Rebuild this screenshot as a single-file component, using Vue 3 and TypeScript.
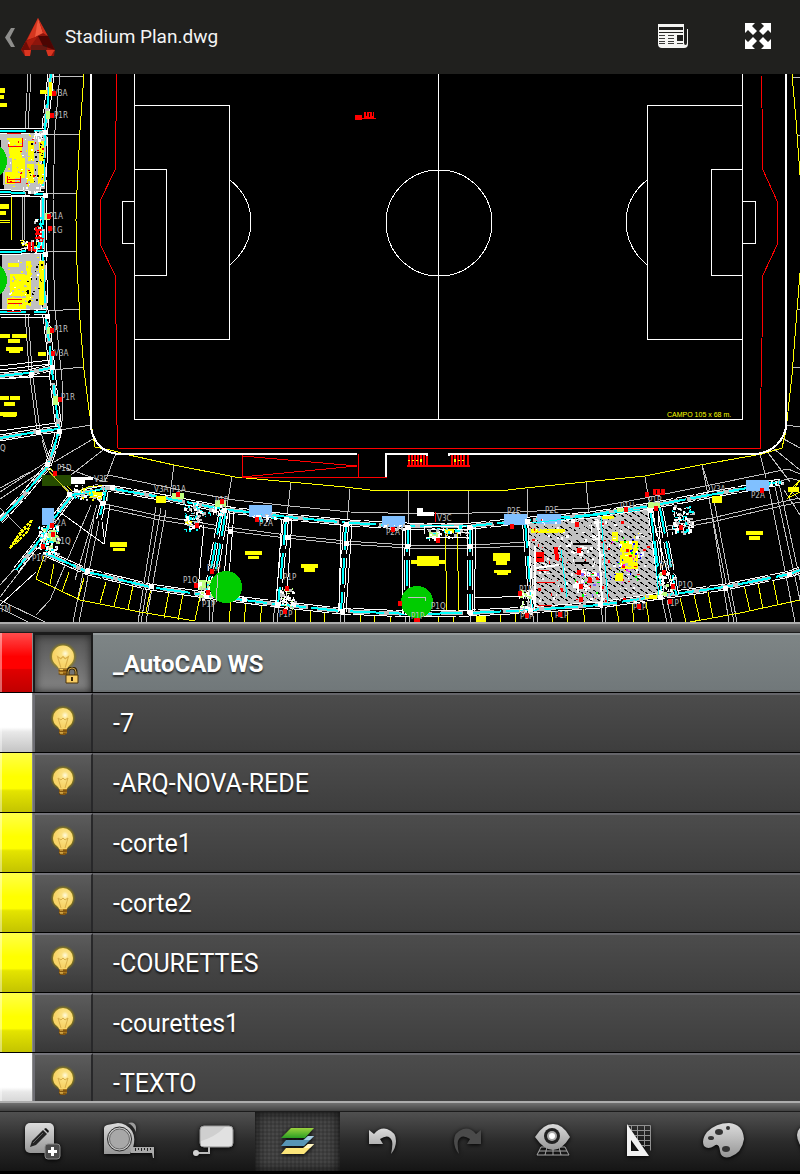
<script setup lang="ts">
import { ref } from 'vue'

interface Layer { name: string; tone: 'red' | 'white' | 'yellow'; locked?: boolean }
interface Tag { x: number; y: number; t: string }
interface Speck { x: number; y: number; w: number; h: number; c: string }

const layers: Layer[] = [
  { name: '_AutoCAD WS', tone: 'red', locked: true },
  { name: '-7', tone: 'white' },
  { name: '-ARQ-NOVA-REDE', tone: 'yellow' },
  { name: '-corte1', tone: 'yellow' },
  { name: '-corte2', tone: 'yellow' },
  { name: '-COURETTES', tone: 'yellow' },
  { name: '-courettes1', tone: 'yellow' },
  { name: '-TEXTO', tone: 'white' },
]
const selected = ref(0)

const tools = ['Draw', 'Measure', 'Comment', 'Layers', 'Undo', 'Redo', 'View', 'Units', 'Colors', 'Location']
const activeTool = ref('Layers')

const WHITE = '#fff'
const GRAY = '#c0c0c0'
const CYAN = '#0ff'
const YELLOW = '#ff0'
const RED = '#f00'

// Wall centre lines of the stands
const walls = [
  '51,74 48,100 45,128 43,200 43,250 45,310 50,350 54,390 59,430 54,448 48,465',
  '72,495 108,488 160,497 222,509 288,517 350,523 407,526 471,526 530,520 590,515 650,506 720,493 780,482',
  '45,553 88,572 150,587 205,595 275,604 341,611 410,614 470,613 530,610 600,605 660,596 725,587 790,574 800,570',
  '0,376 28,373 50,368',
  '0,438 36,432 58,429',
  '48,466 24,495 0,521',
  '72,495 56,516 36,545 16,570',
]
const slimWalls = [
  '222,509 206,596', '226,510 214,582', '286,519 278,606', '346,524 341,612', '408,526 406,614',
  '470,526 470,614', '525,522 532,610', '650,507 662,597', '660,508 676,594', '0,131 44,131', '0,192 44,194',
  '0,252 44,251', '0,312 46,312', '106,490 99,520',
]
const grayLines = [
  '60,74 55,130 53,200 53,250 55,310 59,350 62,380 63,416 60,430',
  '108,475 190,492 235,500 290,506 350,512 425,514 520,512 590,508 640,499 720,483 788,469 800,474',
  '105,504 160,516 220,526 286,535 346,541 407,545 470,545 530,542 570,538', '105,508 160,520 220,530 286,538 346,544 407,548 470,548 530,546',
  '652,529 712,518 772,504 800,498', '652,533 712,522 772,508 800,502',
  '28,74 25,130', '31,74 28,130', '22,195 22,240', '24,195 24,240', '25,312 29,370 37,430', '28,312 32,370 40,430 50,460',
  '50,76 84,77', '46,134 79,135', '45,193 77,193', '44,252 76,251', '46,311 80,309', '52,370 84,367', '60,430 91,425',
  '54,462 93,439', '62,482 103,450', '60,466 105,482 116,453', '166,510 146,622', '161,508 141,622', '156,507 138,622',
  '97,505 75,580', '91,505 50,600 36,615', '99,521 79,622', '94,519 73,622', '206,596 214,602 212,622', '210,600 209,622',
  '174,465 170,495', '232,476 227,506', '291,482 287,516', '350,489 347,522', '409,491 408,525', '468,491 468,525',
  '527,489 528,520', '586,482 589,514', '645,477 650,506', '702,465 710,490', '760,454 766,478', '766,450 790,482', '773,448 800,470', '782,438 800,448',
  '702,465 734,622', '712,490 737,622', '708,490 729,622', '774,482 800,600', '779,483 800,580', '768,484 795,622', '786,425 800,427',
  '792,77 800,77', '797,135 800,135', '797,309 800,309', '793,367 800,368',
  '0,492 48,461', '0,499 48,467', '0,488 30,472', '0,585 36,545', '0,597 34,553', '0,600 45,622', '0,608 28,622', '22,530 0,508',
  '48,466 70,493', '42,440 48,460', '600,600 603,622', '605,600 606,622', '532,610 534,622', '537,610 538,622', '662,600 667,622', '667,600 672,622',
  '406,614 405,622', '410,614 409,622', '470,614 470,622', '275,604 273,622', '279,604 277,622', '341,612 340,622', '345,612 344,622',
  '778,482 790,478 800,481', '784,490 800,515', '788,488 800,500',
]
const whiteLines = [
  '57,510 104,544 110,505', '102,522 105,544', '36,572 0,605', '198,590 204,525', '228,588 234,512', '223,588 230,512',
  '474,598 530,596', '658,513 664,590', '652,514 672,590', '424,534 424,526 466,526', '426,537 466,538', '0,366 50,360', '0,370 50,364', '0,379 50,376',
  '0,431 56,423', '0,128 44,128', '0,196 44,196', '0,249 20,249', '0,317 46,318', '286,519 292,520 286,606', '346,524 352,525 346,612',
  '476,527 474,612', '528,525 532,610', '402,526 403,614', '282,519 276,606', '341,524 339,612',
]
const yellowLines = [
  '84,74 80,130 77,190 76,220 77,265 80,320 84,370 89,410 95,447 110,450 129,455 174,465 235,477 290,482 345,487 370,490 508,490 525,488 585,482 645,476 700,465 762,454 782,448 786,430 792,375 797,310 800,273',
  '792,74 796,120 800,175', '46,468 72,496', '48,466 74,493', '74,493 88,487 108,485', '44,556 36,579 80,600 140,612 195,621',
  '690,622 740,613 800,600', '445,526 447,614', '457,526 459,614', '11,193 11,240', '0,220 10,220', '0,222 10,222', '450,526 447,536',
  '790,490 800,480 788,498 800,492',
]
const roomLines = ['601,517 608,602', '561,550 567,597', '651,512 659,597', '532,523 640,510']

const seats: string[] = [
  '54,564 50,584', '69,572 62,592', '84,578 78,599', '106,582 100,603', '120,584 114,606', '133,586 128,609', '151,588 146,612',
  '169,592 164,618', '183,594 178,620', '200,597 195,620', '231,600 229,622', '246,602 244,622', '262,604 260,622',
  '295,608 295,622', '310,610 310,622', '325,612 324,622', '360,613 360,622', '375,614 374,622', '390,615 390,622', '438,615 438,622',
  '453,615 453,622', '484,614 484,622', '500,614 500,622', '515,613 515,622', '551,612 553,622', '567,609 568,622', '583,607 585,622',
  '616,605 619,622', '632,603 634,622', '646,602 649,622', '680,598 686,622', '694,595 700,621', '708,592 713,618', '744,585 750,611', '758,583 763,609', '773,580 778,605',
]

const yellowBlocks = [
  [110, 542, 17, 5], [113, 548, 12, 3], [245, 551, 17, 4], [248, 556, 11, 3], [301, 564, 17, 4], [304, 568, 11, 4],
  [411, 560, 34, 4], [417, 556, 22, 10], [493, 553, 17, 8], [496, 560, 11, 5], [494, 570, 17, 3], [497, 573, 11, 2],
  [746, 531, 17, 4], [749, 536, 11, 4], [0, 88, 5, 5], [0, 95, 4, 4], [0, 103, 7, 4], [0, 204, 9, 5], [0, 211, 6, 4],
  [0, 334, 10, 4], [12, 334, 15, 4], [8, 339, 12, 4], [6, 347, 17, 4], [9, 351, 11, 2], [0, 396, 9, 4], [10, 396, 10, 4], [4, 402, 11, 4],
  [0, 412, 17, 4], [3, 415, 13, 2], [40, 90, 7, 4], [38, 352, 8, 4], [9, 138, 13, 20], [12, 158, 13, 20], [5, 172, 10, 12],
  [28, 141, 6, 20], [39, 141, 5, 20], [27, 164, 7, 19], [38, 164, 6, 20], [8, 263, 11, 4], [26, 261, 5, 22], [39, 261, 5, 22],
  [26, 283, 5, 22], [39, 283, 5, 22], [10, 274, 16, 22], [7, 298, 19, 11], [156, 496, 10, 7], [90, 492, 12, 6], [185, 521, 7, 4],
  [531, 529, 34, 4], [601, 516, 13, 3], [620, 541, 18, 28], [612, 532, 6, 9], [615, 573, 8, 8], [645, 595, 12, 4], [445, 529, 9, 4],
  [712, 496, 10, 7], [788, 487, 11, 5], [476, 616, 10, 6], [49, 82, 3, 14],
]
const blueBlocks = [[42, 508, 12, 17], [249, 505, 23, 12], [382, 516, 23, 11], [504, 514, 23, 11], [537, 514, 24, 10], [746, 480, 23, 11]]
const greenish = [[172, 493, 12, 6], [215, 500, 11, 7], [49, 530, 7, 12], [199, 580, 7, 10], [429, 532, 10, 5], [648, 502, 12, 6], [46, 111, 4, 8], [45, 213, 5, 7], [47, 327, 5, 7], [53, 396, 5, 9], [617, 508, 10, 4], [657, 592, 10, 4]]
const redBlocks = [
  [52, 91], [50, 113], [47, 214], [48, 226], [50, 328], [51, 351], [58, 397], [53, 471], [176, 492], [220, 499], [255, 517], [391, 527], [436, 538],
  [510, 524], [624, 507], [654, 506], [760, 488], [50, 523], [51, 532], [41, 544], [195, 523], [210, 569], [194, 583], [206, 590], [285, 586], [283, 609],
  [398, 601], [518, 591], [525, 613], [558, 612], [637, 604], [668, 599], [671, 584], [662, 570], [679, 525], [575, 522], [577, 548], [577, 570], [579, 584], [579, 597], [588, 578], [645, 492],
]
const nodes = [
  [45, 462], [67, 492], [85, 569], [149, 584], [204, 593], [242, 597], [275, 602], [340, 609], [405, 610], [468, 610], [528, 608], [598, 602], [658, 595],
  [723, 586], [787, 572], [222, 508], [284, 517], [344, 522], [405, 525], [467, 525], [525, 519], [648, 508], [285, 535], [344, 541], [405, 544], [467, 544],
  [228, 529], [50, 365], [57, 429], [36, 430], [43, 130], [43, 193], [43, 252], [45, 314], [29, 372], [110, 485], [100, 501],
]

const tags: Tag[] = [
  { x: 53, y: 96, t: 'V3A' }, { x: 54, y: 118, t: 'P1R' }, { x: 49, y: 219, t: 'P1A' }, { x: 48, y: 233, t: 'P1G' }, { x: 54, y: 332, t: 'P1R' },
  { x: 54, y: 356, t: 'V3A' }, { x: 61, y: 400, t: 'P1R' }, { x: 0, y: 451, t: 'Q' }, { x: 57, y: 471, t: 'P1D' }, { x: 94, y: 482, t: 'V3E' },
  { x: 154, y: 492, t: 'V3A' }, { x: 172, y: 492, t: 'P1A' }, { x: 215, y: 503, t: 'P1P' }, { x: 259, y: 526, t: 'P2A' }, { x: 386, y: 535, t: 'P2A' },
  { x: 437, y: 521, t: 'V3C' }, { x: 507, y: 514, t: 'P2E' }, { x: 545, y: 513, t: 'P2E' }, { x: 620, y: 509, t: 'P1H' }, { x: 648, y: 503, t: 'P1B' },
  { x: 711, y: 492, t: 'V3A' }, { x: 751, y: 498, t: 'P2A' }, { x: 52, y: 526, t: 'P2A' }, { x: 56, y: 544, t: 'P1Q' }, { x: 32, y: 561, t: 'P1Q' },
  { x: 183, y: 583, t: 'P1Q' }, { x: 202, y: 607, t: 'P1P' }, { x: 207, y: 571, t: 'P1P' }, { x: 283, y: 580, t: 'P1P' }, { x: 279, y: 617, t: 'P1P' }, { x: 431, y: 609, t: 'P1Q' },
  { x: 411, y: 619, t: 'P1P' }, { x: 519, y: 592, t: 'P1P' }, { x: 520, y: 619, t: 'P1P' }, { x: 555, y: 618, t: 'P1P' }, { x: 633, y: 610, t: 'P1P' },
  { x: 678, y: 588, t: 'P1Q' }, { x: 670, y: 606, t: '1P' }, { x: 660, y: 568, t: 'P1P' }, { x: 0, y: 612, t: 'TM' },
]

// Small fittings scattered over a room, from a fixed seed so that every draw is the same
function scatter(x: number, y: number, w: number, h: number, n: number, colors: string[], seed: number, size = 3): Speck[] {
  let s = seed
  const next = (): number => {
    s = (s * 1103515245 + 12345) % 2147483648
    return s / 2147483648
  }
  return Array.from({ length: n }, () => ({
    x: Math.round(x + next() * w),
    y: Math.round(y + next() * h),
    w: 1 + Math.floor(next() * size),
    h: 1 + Math.floor(next() * size),
    c: colors[Math.floor(next() * colors.length)],
  }))
}
const specks: Speck[] = [
  ...scatter(6, 134, 37, 56, 100, [GRAY, WHITE, GRAY, YELLOW, YELLOW, RED], 7, 2),
  ...scatter(28, 142, 15, 40, 20, ['#000'], 8, 2),
  ...scatter(34, 130, 9, 10, 26, [WHITE, GRAY], 9),
  ...scatter(22, 185, 20, 8, 26, [WHITE, GRAY], 10),
  ...scatter(6, 256, 37, 54, 90, [GRAY, WHITE, YELLOW, YELLOW, GRAY], 11, 2),
  ...scatter(26, 262, 17, 42, 20, ['#000'], 12, 2),
  ...scatter(18, 238, 20, 12, 50, [GRAY, WHITE, YELLOW], 13),
  ...scatter(34, 216, 8, 34, 40, [WHITE, CYAN, GRAY, RED], 17),
  ...scatter(183, 502, 17, 28, 90, [WHITE, GRAY, CYAN, WHITE], 19),
  ...scatter(200, 504, 26, 12, 40, [WHITE, GRAY, CYAN], 23),
  ...scatter(38, 525, 20, 28, 110, [WHITE, GRAY, CYAN, '#c0ff80', WHITE], 29),
  ...scatter(280, 588, 14, 20, 60, [WHITE, GRAY, '#c0ff80', WHITE], 31),
  ...scatter(199, 578, 14, 20, 60, [WHITE, GRAY, '#c0ff80'], 37),
  ...scatter(426, 526, 42, 12, 60, [WHITE, CYAN, GRAY, WHITE], 41),
  ...scatter(672, 504, 20, 28, 110, [WHITE, GRAY, CYAN, WHITE], 43),
  ...scatter(658, 572, 16, 22, 60, [WHITE, GRAY, '#c0ff80', WHITE], 47),
  ...scatter(519, 590, 14, 22, 70, [WHITE, GRAY, '#c0ff80', WHITE], 53),
  ...scatter(530, 518, 118, 84, 380, [WHITE, GRAY, GRAY, GRAY, WHITE, RED], 59),
  ...scatter(570, 517, 32, 84, 90, [GRAY, WHITE, GRAY], 60, 5),
  ...scatter(575, 572, 28, 24, 40, ['#0f0', '#8060ff', WHITE, RED], 61),
  ...scatter(608, 532, 32, 50, 40, ['#f0f', '#00f', '#0f0', YELLOW], 67, 2),
  ...scatter(72, 484, 32, 16, 50, [WHITE, CYAN, YELLOW, GRAY], 71),
  ...scatter(768, 479, 14, 6, 20, [WHITE, GRAY, CYAN], 73),
  ...scatter(384, 524, 20, 5, 20, [WHITE, GRAY], 79),
  ...scatter(250, 511, 28, 8, 24, [WHITE, GRAY, CYAN], 83),
]
</script>

<template>
  <div class="app">
    <header class="topbar">
      <button class="back" aria-label="Back">
        <svg width="50" height="40" viewBox="5 16 50 40" aria-hidden="true">
          <path d="M11 27h4l-5 9.500 5 9.500h-4l-6-9.500z" fill="#8e8e8c" />
          <path d="M38 17 21 49l4 6h5l1-6h16l2 6h5l1-6z" fill="#8d150c" />
          <path d="M38 17 27 39l9-3z" fill="#d4361f" /><path d="M38 17l-3 19 8-4z" fill="#f0593e" /><path d="M38 17l5 15 5 3z" fill="#cf2e1b" />
          <path d="M26 40l12-5-10 14h-7z" fill="#a81c0e" /><path d="M38 35l10 0 7 14-12-4z" fill="#4c0502" /><path d="M21 49l5-9 4 9z" fill="#700c05" />
          <path d="M31 44h16v5H31z" fill="#20201e" opacity="0.35" />
          <path d="M24 49h7l-1 6h-5zM46 49h9l-1 1-3 5h-3z" fill="#d93520" />
        </svg>
      </button>
      <h1>Stadium Plan.dwg</h1>
      <button class="act" aria-label="Properties">
        <svg width="32" height="26" viewBox="1 0 32 26" aria-hidden="true">
          <path d="M1 1h26v19q0 2 1.500 2t1.500-2V6h1v15q0 4-4 4H5q-4 0-4-4z" fill="#f5f5f3" />
          <path d="M2 4h24v3H2zM2 9h24v1H2zM20 12h6v6h-6z" fill="#20201e" />
          <path d="M2 12.500h6M11 12.500h6M2 15.500h6M11 15.500h6M2 18.500h6M11 18.500h6M2 20.500h6M11 20.500h6M20 20.500h6" stroke="#3c3c3a" fill="none" />
        </svg>
      </button>
      <button class="act" aria-label="Full screen">
        <svg width="26" height="26" viewBox="0 0 26 26" fill="#fff" aria-hidden="true">
          <path d="M0 0h10L7 3l5 5-4 4-5-5-3 3z" />
          <path d="M26 0H16l3 3-5 5 4 4 5-5 3 3z" />
          <path d="M0 26h10l-3-3 5-5-4-4-5 5-3-3z" />
          <path d="M26 26H16l3-3-5-5 4-4 5 5 3-3z" />
        </svg>
      </button>
    </header>

    <main>
      <svg class="plan" viewBox="0 74 800 548" role="img" aria-label="Stadium plan" shape-rendering="crispEdges">
        <defs>
          <pattern id="hatch" width="8" height="7" patternUnits="userSpaceOnUse">
            <rect width="8" height="7" fill="#c0c0c0" />
            <path d="M0 1l4 3M5 4l3 2" stroke="#000" fill="none" />
          </pattern>
        </defs>
        <path d="M0 133h44v59H4zM2 253h42v58H2z" fill="#c0c0c0" />
        <path d="M528 523 650 508 659 596 532 608z" fill="url(#hatch)" />
        <path d="M75 492l15-6h18v15l-20-5z" fill="#5ba394" />
        <g fill="none" stroke="#c0c0c0"><polyline v-for="p in grayLines" :key="p" :points="p" /></g>
        <g fill="none" stroke="#ff0">
          <polyline v-for="p in yellowLines" :key="p" :points="p" />
          <polyline v-for="p in seats" :key="p" :points="p" />
        </g>
        <g fill="none">
          <g v-for="p in walls" :key="p">
            <polyline :points="p" stroke="#fff" stroke-width="7" stroke-dasharray="40 3 18 2" />
            <polyline :points="p" stroke="#000" stroke-width="5" />
            <polyline :points="p" stroke="#c0c0c0" stroke-width="4" stroke-dasharray="22 9" />
            <polyline :points="p" stroke="#0ff" stroke-width="2" stroke-dasharray="34 5" />
          </g>
          <g v-for="p in slimWalls" :key="p">
            <polyline :points="p" stroke="#fff" stroke-width="6" stroke-dasharray="30 4" />
            <polyline :points="p" stroke="#000" stroke-width="4" />
            <polyline :points="p" stroke="#0ff" stroke-width="2" stroke-dasharray="26 8" />
          </g>
        </g>
        <g fill="none" stroke="#fff"><polyline v-for="p in whiteLines" :key="p" :points="p" /></g>
        <g fill="#80c0ff"><rect v-for="(b, i) in blueBlocks" :key="i" :x="b[0]" :y="b[1]" :width="b[2]" :height="b[3]" /></g>
        <g fill="#c0ff80"><rect v-for="(b, i) in greenish" :key="i" :x="b[0]" :y="b[1]" :width="b[2]" :height="b[3]" /></g>
        <g fill="#ff0"><rect v-for="(b, i) in yellowBlocks" :key="i" :x="b[0]" :y="b[1]" :width="b[2]" :height="b[3]" /></g>
        <rect x="42" y="475" width="29" height="11" fill="#264c00" />
        <path d="M46 468 72 496" stroke="#cccc20" />
        <path d="M71 477h22v3h-8v4h-14zM417 508h6v4h11v4h-17z" fill="#fff" />
        <path d="M10 548 22 530 32 520 27 532 18 541zM14 542l12-14" fill="none" stroke="#ff0" stroke-width="2" stroke-dasharray="3 1" />
        <rect v-for="(s, i) in specks" :key="i" :x="s.x" :y="s.y" :width="s.w" :height="s.h" :fill="s.c" />
        <g fill="none" stroke="#0ff"><polyline v-for="p in roomLines" :key="p" :points="p" /></g>
        <path d="M535 546v60M535 568l24-3M598 520l4 82" fill="none" stroke="#fff" stroke-width="2" />
        <g fill="#fff"><rect v-for="(n, i) in nodes" :key="i" :x="n[0]" :y="n[1]" width="5" height="5" /></g>
        <g fill="#0c0">
          <circle cx="226" cy="587" r="16" /><circle cx="417" cy="602" r="16" />
          <circle cx="-12" cy="161" r="19" /><circle cx="-12" cy="280" r="19" />
        </g>
        <path d="M218 575l-2 27M408 597h17v4" fill="none" stroke="#c0c0c0" />
        <g class="tags"><text v-for="(t, i) in tags" :key="i" :x="t.x" :y="t.y">{{ t.t }}</text></g>
        <g fill="#f00">
          <rect v-for="(b, i) in redBlocks" :key="i" :x="b[0]" :y="b[1]" width="4" height="5" />
          <path d="M536 552h8v10h-8zM554 547l4 0 1 14-4-1zM355 115h7v5h-7zM362 118h14v1h-14zM364 112h10v6h-10zM653 489h12v6h-12zM35 229h7v2h-7zM35 233h7v2h-7zM35 237h7v2h-7zM28 242h3v9h-3zM32 242h2v9h-2zM414 618h6v4h-6z" />
        </g>
        <path d="M366 112v4M369 113v4M372 112v4M656 490v4M660 489v4M537 557h5M573 544h18M575 563h14" stroke="#000" stroke-width="1" fill="none" />
        <path d="M573 544h18M575 563h14" stroke="#000" stroke-width="2" />
        <g fill="none" stroke="#f00">
          <path d="M116 74v47M115 121v49l-15 31v43l15 31v49M116 324v51l1 50 1 23h642v-10l1-50 1-50 1-63 14-30v-44l-14-31-1-62-1-33" />
          <path d="M242 455v22h144v-22M358 454v23M242 456l115 10-115 11" />
          <path d="M8 144v2h14v-8M7 133h14M7 176v6h13v-6M7 179h13M8 299h14M8 303h14M7 311h14M435 512v10M537 570h12M537 582h18M538 605h14" />
          <path d="M409 454v12M412 454v12M415 454v12M418 454v12M421 454v12M424 454v12M427 454v12M452 454v12M455 454v12M458 454v12M461 454v12M464 454v12M468 454v12" stroke-width="2" />
          <path d="M407 466h63" stroke-width="2" />
        </g>
        <path d="M408 460h14M454 460h12" stroke="#ff0" stroke-dasharray="2 2" />
        <path d="M420 459h2v3h-2zM454 459h2v3h-2z" fill="#ff0" />
        <g fill="none" stroke="#fff">
          <path d="M134 74v345h608V74M438 74v345M134 105h95v234h-95M134 169h32v106h-32M134 201h-12v42h12M742 105h-95v234h95M742 169h-31v106h31M742 201h13v42h-13" />
          <circle cx="439" cy="223" r="53" />
          <path d="M230 180q21 17 21 42t-21 43M647 180q-21 17-21 42t21 43" />
          <path d="M91 74v354q4 23 27 26h239M386 477v-23h41v2M449 456v-2h307q24-3 30-26V74" stroke-width="2" />
        </g>
        <text class="campo" x="667" y="417">CAMPO 105 x 68 m.</text>
      </svg>
    </main>

    <div class="bar"></div>

    <ul class="layers" aria-label="Layers">
      <li v-for="(l, i) in layers" :key="l.name" :class="{ on: i === selected }">
        <button class="swatch" :class="l.tone" :aria-label="`Color of ${l.name}`"></button>
        <button class="bulb" :aria-label="`Visibility of ${l.name}`">
          <svg :class="{ big: l.locked }" width="32" height="42" viewBox="0 0 32 42" aria-hidden="true">
            <defs>
              <radialGradient :id="`glow${i}`"><stop offset="0.7" stop-color="#b8a000" stop-opacity="0.8" /><stop offset="1" stop-color="#807000" stop-opacity="0" /></radialGradient>
              <radialGradient :id="`glass${i}`" cx="0.6" cy="0.35"><stop offset="0" stop-color="#fffbe0" /><stop offset="0.35" stop-color="#fbe284" /><stop offset="1" stop-color="#f8d468" /></radialGradient>
            </defs>
            <circle cx="16" cy="16" r="13" :fill="`url(#glow${i})`" />
            <path d="M16 6a10 10 0 0 1 10 10q0 5-4 8-2 2-2 3h-8q0-1-2-3-4-3-4-8A10 10 0 0 1 16 6z" :fill="`url(#glass${i})`" />
            <path d="M14 26 11 16l3 2 2-2 2 2 3-2-3 10" fill="none" stroke="#d8ae4a" />
            <path d="M12 27h8v4l-2 2h-4l-2-2z" fill="#a8741c" /><path d="M12 29h8M12 32h7" stroke="#5b3606" /><path d="M13 28h3M13 31h3" stroke="#f8d060" />
          </svg>
          <svg v-if="l.locked" class="lock" width="14" height="17" viewBox="0 0 14 17" aria-hidden="true">
            <path d="M3 8V5q0-4 4-4t4 4v3" fill="none" stroke="#382807" stroke-width="3" /><path d="M3 8V5q0-4 4-4t4 4v3" fill="none" stroke="#c9a04a" />
            <path d="M1 8h12v8H1z" fill="#f8cc62" stroke="#4a3208" /><path d="M6 10h2v4H6z" fill="#3a2808" />
          </svg>
        </button>
        <button class="name" @click="selected = i">{{ l.name }}</button>
      </li>
    </ul>

    <div class="bar"></div>

    <nav class="tools" aria-label="Tools">
      <button v-for="t in tools" :key="t" :class="{ active: t === activeTool }" :aria-label="t" @click="activeTool = t">
        <svg width="85" height="59" viewBox="0 0 85 59" aria-hidden="true">
          <defs>
            <linearGradient :id="`metal-${t}`" x1="0" y1="0" x2="0" y2="1"><stop offset="0" stop-color="#dcdcdc" /><stop offset="1" stop-color="#969696" /></linearGradient>
          </defs>
          <g v-if="t === 'Draw'">
            <rect x="25" y="11" width="29" height="30" rx="5" :fill="`url(#metal-${t})`" />
            <path d="M30 35l2-6 11-11 4 4-11 11z" fill="#242424" /><path d="M44 17l2-1 3 3-1 2z" fill="#111" /><path d="M33 31l10-10" stroke="#666" />
            <rect x="45" y="32" width="15" height="15" rx="3" fill="#4b4b4b" stroke="#8a8a8a" /><path d="M51 35h3v3h3v3h-3v3h-3v-3h-3v-3h3z" fill="#fff" />
          </g>
          <g v-else-if="t === 'Measure'">
            <path d="M19 16q0-2 3-3l11-2q8 0 14 8 4 7 1 17l-3 6H19z" :fill="`url(#metal-${t})`" /><path d="M43 11q7-2 8 4v5q-3-7-8-9z" fill="#9c9c9c" />
            <circle cx="34.500" cy="27" r="12" fill="#c8c8c8" stroke="#2b2b2b" stroke-width="1" /><circle cx="34.500" cy="27" r="10" fill="#a8a8a8" stroke="#666" />
            <path d="M46 35h23v11h-1l-1-5H46z" fill="#aaa" /><path d="M50.500 36v3M53.500 36v2M56.500 36v3M59.500 36v2M62.500 36v3M65.500 36v2" stroke="#222" />
          </g>
          <g v-else-if="t === 'Comment'">
            <path d="M39 34v7H26" fill="none" stroke="#bdbdbd" stroke-width="2" /><circle cx="26" cy="41" r="3" fill="#d2d2d2" />
            <rect x="30" y="14" width="33" height="21" rx="4" fill="#cfcfcf" stroke="#9c9c9c" /><path d="M31 29q14-4 24-14h5q2 0 2 3v14q0 2-2 2H31z" fill="#e1e1e1" />
          </g>
          <g v-else-if="t === 'Layers'">
            <defs><linearGradient id="leaf" x1="0" y1="0" x2="0" y2="1"><stop offset="0" stop-color="#9bd23e" /><stop offset="1" stop-color="#2b9e23" /></linearGradient></defs>
            <path d="M26 42l5-6h17l5-4h6L49 42z" fill="#fbe57a" /><path d="M53 32h6l-4 4h-6z" fill="#fff6c4" />
            <path d="M26 34l5-6h17l5-4h6L49 34z" fill="#5795b5" /><path d="M53 24h6l-4 4h-6z" fill="#a9cde2" />
            <path d="M26 26 36 16h23L50 26z" fill="url(#leaf)" />
          </g>
          <path v-else-if="t === 'Undo'" d="M29 18l5 4q6-7 13-5 9 3 9 12 0 7-5 13 2-9 1-13-3-8-12-2l3 5H29z" :fill="`url(#metal-${t})`" />
          <path v-else-if="t === 'Redo'" d="M56 18l-5 4q-6-7-13-5-9 3-9 12 0 7 5 13-2-9-1-13 3-8 12-2l-3 5h14z" fill="#4a4a4a" />
          <g v-else-if="t === 'View'">
            <path d="M31 35h24l4 8H27zM29 39h28M37 35l-2 8M43 35v8M49 35l2 8" fill="none" stroke="#a5a5a5" />
            <path d="M25 25q8-13 18-13t17 13q-8 13-17 13T25 25z" :fill="`url(#metal-${t})`" /><circle cx="42" cy="24" r="8" fill="#222" /><circle cx="42" cy="24" r="5" fill="#aaa" /><circle cx="42" cy="24" r="3" fill="#fff" />
          </g>
          <g v-else-if="t === 'Units'">
            <path d="M33 13.500h22.500v25M36.500 13v5M42.500 13v15M49.500 13v22M33 18.500h23M40 23.500h16M43 28.500h13M47 33.500h9" fill="none" stroke="#909090" />
            <path d="M32 12v32h22zm4 16 8 11h-8z" fill="#f2f2f2" fill-rule="evenodd" />
          </g>
          <g v-else-if="t === 'Colors'">
            <path d="M49 11q14 1 15 16-2 14-14 18-9 2-10-6-1-9-6-5-6 4-10 0-3-6 3-14 9-9 22-9z" :fill="`url(#metal-${t})`" />
            <ellipse cx="31" cy="26" rx="3" ry="2" fill="#333" /><ellipse cx="39" cy="20" rx="4" ry="3" fill="#333" /><ellipse cx="48" cy="16" rx="2" ry="2" fill="#333" /><ellipse cx="46" cy="37" rx="4" ry="3" fill="#333" />
          </g>
          <path v-else d="M42 13a10 10 0 0 1 10 10q0 8-10 20-10-12-10-20a10 10 0 0 1 10-10z" :fill="`url(#metal-${t})`" />
        </svg>
      </button>
    </nav>
  </div>
</template>

<style>
body { margin: 0; background: #000; }
</style>

<style scoped>
.app { display: flex; flex-direction: column; height: 100vh; overflow: hidden; background: #000; font-family: Roboto, "Noto Sans", sans-serif; color: #fff; }
button { margin: 0; padding: 0; border: 0; background: none; color: inherit; font: inherit; cursor: pointer; }
.topbar { display: flex; flex: none; align-items: center; height: 74px; padding: 0 28px 0 5px; box-sizing: border-box; background: #20201e; }
.back { display: flex; }
h1 { flex: 1; margin: 0 0 0 10px; font-size: 19px; font-weight: 400; line-height: 28px; color: #f4f4f4; }
.act { display: flex; align-items: center; justify-content: center; width: 32px; height: 72px; margin-left: 54px; padding-bottom: 2px; box-sizing: border-box; }
.act:last-child { width: 28px; }
main { flex: none; }
.plan { display: block; width: 100%; height: auto; background: #000; }
.tags { font: 8px "Liberation Sans Narrow", "DejaVu Sans Condensed", sans-serif; fill: #c0c0c0; }
.campo { font: 7px "Liberation Sans", sans-serif; fill: #ff0; }
.bar { flex: none; height: 11px; box-sizing: border-box; border-top: 2px solid #adadad; border-bottom: 1px solid #1c1c1c; background: linear-gradient(#707070, #404040); }
.layers { flex: 1; min-height: 0; margin: 0; padding: 0; overflow: hidden; list-style: none; }
li { display: flex; height: 60px; box-sizing: border-box; border-bottom: 1px solid #000; background: #6e6e74; }
.swatch { width: 33px; border-right: 1px solid #8a8a8a; border-left: 2px solid rgba(255, 255, 255, 0.4); }
.swatch.red { background: linear-gradient(#ff4c4c, #f00 40%, #f00 60%, #e00000 62%, #c00000); }
.swatch.yellow { background: linear-gradient(#ffff48, #ff0 40%, #ff0 60%, #e4e400 64%, #c4c400); }
.swatch.white { background: linear-gradient(#fff 58%, #e8e8e8 66%, #c4c4c4); }
.bulb { position: relative; display: flex; justify-content: center; width: 58px; margin-left: 2px; border-right: 2px solid #28282a; border-top: 2px solid #75757c; background: linear-gradient(#5c5c5c, #383838); }
.bulb svg { margin-top: 7px; }
.bulb .big { width: 36px; height: 46px; margin-top: 4px; }
.bulb .lock { position: absolute; right: 12px; bottom: 8px; margin: 0; }
.name { flex: 1; padding: 2px 0 0 20px; border-top: 2px solid #65656a; border-bottom: 2px solid #3a3a3a; background: linear-gradient(#4c4c4c, #3e3e3e); font-size: 25px; line-height: 28px; text-align: left; text-shadow: 0 2px 2px rgba(0, 0, 0, 0.7); }
.on { background: #1b1b1b; }
.on .bulb { border-color: #1b1b1b; background: linear-gradient(#555, #858585); box-shadow: inset 0 0 8px #222; }
.on .name { border-top-color: #969c9e; border-bottom-color: #6b7072; background: linear-gradient(#7e8586, #71787a); font-size: 24px; font-weight: 700; }
.tools { display: flex; flex: none; height: 62px; box-sizing: border-box; overflow: hidden; border-bottom: 3px solid #000; background: linear-gradient(#505050, #2b2b2b 50%, #151515); }
.tools button { flex: none; width: 85px; }
.tools svg { display: block; filter: drop-shadow(0 1px 2px #000); }
.tools .active { background: radial-gradient(circle, #484848 1px, #383838 2px) 0 0 / 4px 4px; box-shadow: inset 0 0 12px #0a0a0a; }
</style>
